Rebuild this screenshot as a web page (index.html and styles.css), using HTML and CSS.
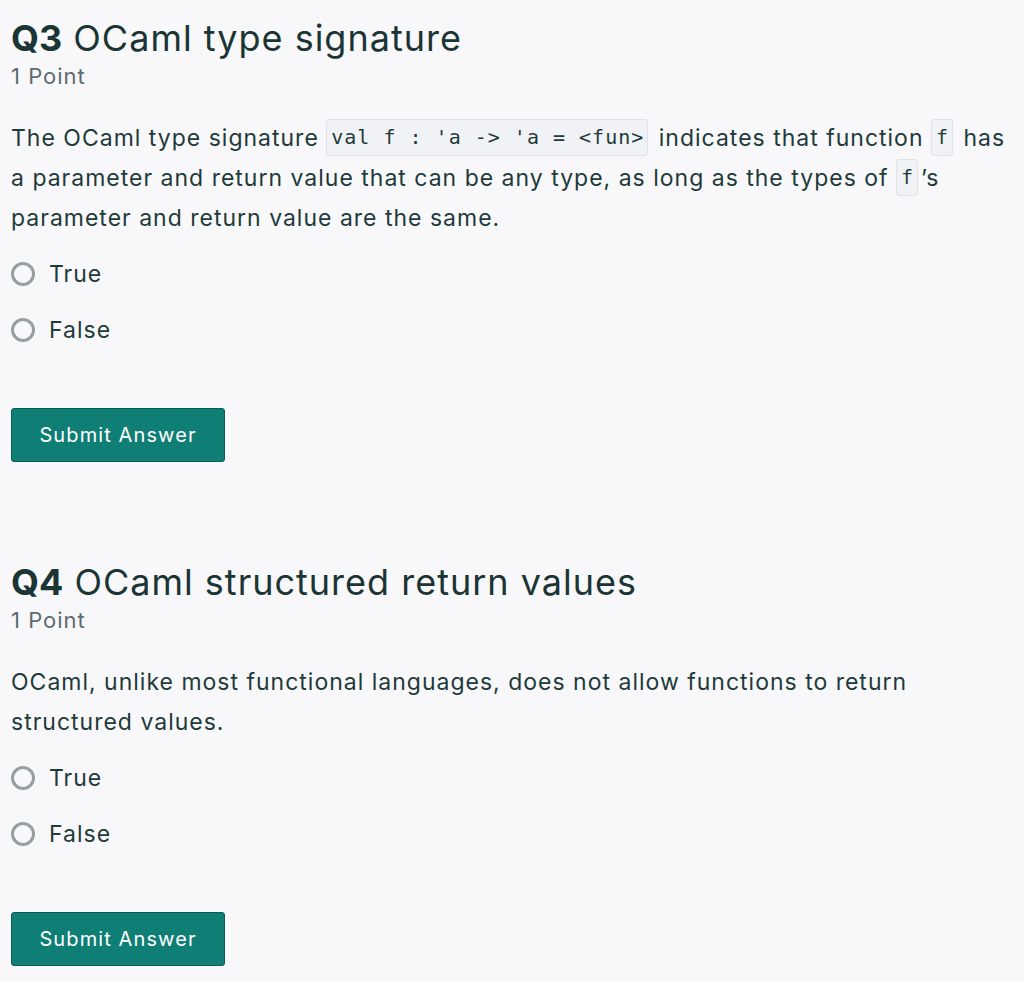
FILE: index.html
```html
<!DOCTYPE html>
<html lang="en">

<head>
    <meta charset="utf-8">
    <link rel="stylesheet" href="styles.css">
</head>

<body>
    <section class="question">
        <h2 class="q-title"><strong>Q3</strong> OCaml type signature</h2>
        <div class="q-points">1 Point</div>
        <p class="q-text">The OCaml type signature <code>val f : 'a -&gt; 'a = &lt;fun&gt;</code> indicates that function <code>f</code> has a parameter and return value that can be any type, as long as the types of <code>f</code>’s parameter and return value are the same.</p>
        <div class="options">
            <label class="option"><input type="radio" name="q3"><span>True</span></label>
            <label class="option"><input type="radio" name="q3"><span>False</span></label>
        </div>
        <button class="submit">Submit Answer</button>
    </section>

    <section class="question">
        <h2 class="q-title"><strong>Q4</strong> OCaml structured return values</h2>
        <div class="q-points">1 Point</div>
        <p class="q-text">OCaml, unlike most functional languages, does not allow functions to return structured values.</p>
        <div class="options">
            <label class="option"><input type="radio" name="q4"><span>True</span></label>
            <label class="option"><input type="radio" name="q4"><span>False</span></label>
        </div>
        <button class="submit">Submit Answer</button>
    </section>
</body>

</html>
```

FILE: styles.css
```css
body {
    margin: 0;
    padding: 0 11px;
    background: #f8f8fa;
    color: #1f3a3a;
    font-family: "Inter", sans-serif;
}

.question {
    padding-top: 16px;
    margin-bottom: 82px;
}

.question:last-child {
    margin-bottom: 0;
}

.q-title {
    margin: 0;
    font-size: 36px;
    line-height: 44px;
    font-weight: 400;
    letter-spacing: 1px;
    color: #1b3434;
}

.q-title strong {
    font-weight: 700;
    letter-spacing: 0;
}

.q-points {
    font-size: 22px;
    line-height: 32px;
    letter-spacing: 1px;
    color: #5b6d6f;
}

.q-text {
    margin: 26px 0 0;
    font-size: 23px;
    line-height: 40px;
    letter-spacing: 1px;
}

.q-text code {
    display: inline-block;
    font-family: "DejaVu Sans Mono", monospace;
    font-size: 20px;
    line-height: 35px;
    letter-spacing: 1px;
    background: #f1f2f5;
    border: 1px solid #dfe2e6;
    border-radius: 3px;
    padding: 0 3px 0 4px;
    margin: 1px 3px 0 0;
    vertical-align: top;
}

.options {
    margin-top: 8px;
}

.option {
    display: flex;
    align-items: center;
    height: 56px;
    font-size: 23px;
    letter-spacing: 1px;
    cursor: pointer;
}

.option input {
    -webkit-appearance: none;
    appearance: none;
    width: 24px;
    height: 24px;
    margin: 0 14px 0 0;
    border: 3px solid #97a0a0;
    border-radius: 50%;
    background: transparent;
}

.submit {
    display: block;
    margin-top: 50px;
    width: 214px;
    height: 54px;
    background: #0f7e75;
    border: 1px solid #0a5d56;
    border-radius: 3px;
    color: #ffffff;
    font-family: inherit;
    font-size: 20px;
    letter-spacing: 1.1px;
    cursor: pointer;
}
```
